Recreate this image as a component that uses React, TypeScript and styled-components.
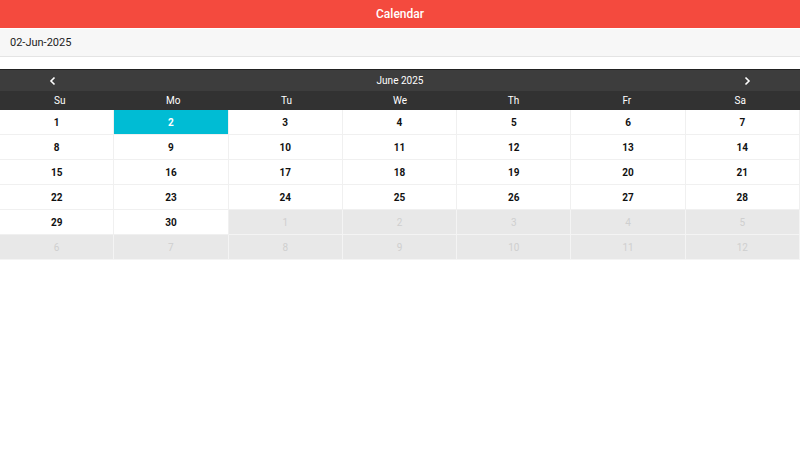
import React from "react";
import styled, { createGlobalStyle } from "styled-components";

const GlobalStyle = createGlobalStyle`
  html, body {
    margin: 0;
    padding: 0;
    background: #ffffff;
    font-family: Roboto, "Liberation Sans", sans-serif;
  }
`;

const WEEKDAYS = ["Su", "Mo", "Tu", "We", "Th", "Fr", "Sa"];

interface DayType {
  day: number;
  outside: boolean;
}

const buildDays = (): DayType[] => {
  const days: DayType[] = [];
  for (let i = 1; i <= 30; i++) days.push({ day: i, outside: false });
  for (let i = 1; i <= 12; i++) days.push({ day: i, outside: true });
  return days;
};

const App: React.FC = () => {
  const days = buildDays();
  const selected = 2;

  return (
    <>
      <GlobalStyle />
      <Page>
        <TitleBar>Calendar</TitleBar>
        <DateField>02-Jun-2025</DateField>
        <CalendarBox>
          <NavRow>
            <NavButton>
              <svg width="10" height="10" viewBox="0 0 10 10">
                <path d="M6.5 1.5 L3 5 L6.5 8.5" fill="none" stroke="#fff" strokeWidth="1.6" />
              </svg>
            </NavButton>
            <MonthLabel>June 2025</MonthLabel>
            <NavButton>
              <svg width="10" height="10" viewBox="0 0 10 10">
                <path d="M3.5 1.5 L7 5 L3.5 8.5" fill="none" stroke="#fff" strokeWidth="1.6" />
              </svg>
            </NavButton>
          </NavRow>
          <WeekRow>
            {WEEKDAYS.map((w) => (
              <WeekDay key={w}>{w}</WeekDay>
            ))}
          </WeekRow>
          <DaysGrid>
            {days.map((d, i) => (
              <DayCell
                key={i}
                $outside={d.outside}
                $selected={!d.outside && d.day === selected}
              >
                {d.day}
              </DayCell>
            ))}
          </DaysGrid>
        </CalendarBox>
      </Page>
    </>
  );
};

const Page = styled.div`
  width: 800px;
  height: 450px;
  display: flex;
  flex-direction: column;
`;

const TitleBar = styled.div`
  height: 28px;
  background: #f44a3e;
  color: #ffffff;
  font-size: 12px;
  font-weight: 500;
  display: flex;
  align-items: center;
  justify-content: center;
`;

const DateField = styled.div`
  height: 27px;
  margin-top: 1px;
  background: #f7f7f7;
  border-bottom: 1px solid #e4e4e4;
  padding-left: 10px;
  font-size: 11px;
  color: #222;
  display: flex;
  align-items: center;
`;

const CalendarBox = styled.div`
  margin-top: 12px;
  border-top: 1px solid #222;
`;

const NavRow = styled.div`
  height: 21px;
  background: #3d3d3d;
  display: grid;
  grid-template-columns: 106px 1fr 106px;
  align-items: center;
`;

const NavButton = styled.div`
  display: flex;
  align-items: center;
  justify-content: center;
`;

const MonthLabel = styled.div`
  color: #ffffff;
  font-size: 10px;
  text-align: center;
`;

const WeekRow = styled.div`
  height: 19px;
  padding: 0 3px;
  background: #323232;
  display: grid;
  grid-template-columns: repeat(7, 1fr);
  align-items: center;
`;

const WeekDay = styled.div`
  color: #ffffff;
  font-size: 10px;
  text-align: center;
`;

const DaysGrid = styled.div`
  display: grid;
  grid-template-columns: repeat(7, 1fr);
`;

const DayCell = styled.div<{ $outside: boolean; $selected: boolean }>`
  height: 25px;
  box-sizing: border-box;
  border-right: 1px solid ${(p) => (p.$outside ? "#f4f4f4" : "#f0f0f0")};
  border-bottom: 1px solid ${(p) => (p.$outside ? "#f4f4f4" : "#f0f0f0")};
  background: ${(p) =>
    p.$selected ? "#00bcd4" : p.$outside ? "#e8e8e8" : "#ffffff"};
  color: ${(p) =>
    p.$selected ? "#ffffff" : p.$outside ? "#cfcfcf" : "#111111"};
  font-size: 10px;
  font-weight: ${(p) => (p.$outside ? 400 : 700)};
  display: flex;
  align-items: center;
  justify-content: center;
`;

export default App;
